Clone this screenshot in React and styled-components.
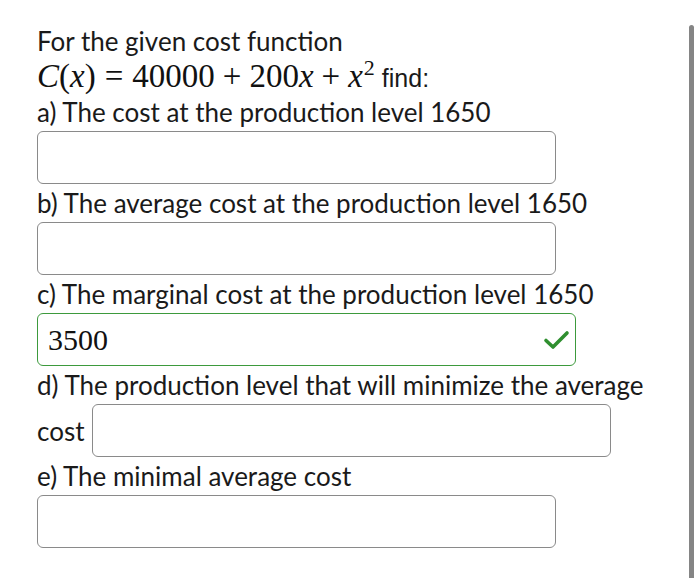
import React from "react";
import styled, { createGlobalStyle } from "styled-components";

const Global = createGlobalStyle`
  html, body { margin: 0; padding: 0; background: #fff; }
  body { width: 700px; height: 578px; overflow: hidden; }
`;

const Page = styled.div`
  position: relative;
  width: 700px;
  height: 578px;
  box-sizing: border-box;
  padding: 24px 0 0 37px;
  font-family: "Lato", "Open Sans", sans-serif;
  font-size: 26px;
  color: #1a1a1a;
`;

const Line = styled.div`
  height: ${(p) => p.$h || 38}px;
  line-height: ${(p) => p.$h || 38}px;
  white-space: nowrap;
`;

const MathLine = styled.div`
  height: 36px;
  line-height: 36px;
  white-space: nowrap;
  display: flex;
  align-items: baseline;
`;

const Formula = styled.span`
  font-family: "Liberation Serif", "DejaVu Serif", serif;
  font-size: 33px;
  color: #111;
`;

const V = styled.i`
  font-style: italic;
`;

const Op = styled.span`
  margin: 0 ${(p) => p.$s || 8}px;
`;

const Sup = styled.sup`
  font-size: 22px;
  line-height: 0;
  vertical-align: 12px;
  margin-left: 1px;
`;

const Find = styled.span`
  font-family: "Liberation Sans", Arial, sans-serif;
  font-size: 25px;
  margin-left: 7px;
`;

const Row = styled.div`
  display: flex;
  align-items: center;
  gap: 7px;
`;

const Box = styled.div`
  position: relative;
  box-sizing: border-box;
  width: ${(p) => p.$w}px;
  height: 53px;
  border: 1.5px solid ${(p) => (p.$ok ? "#3d9a3d" : "#8a8a8a")};
  border-radius: 6px;
  background: #fff;
  display: flex;
  align-items: center;
  padding-left: 10px;
`;

const Value = styled.span`
  font-family: "Liberation Serif", "DejaVu Serif", serif;
  font-size: 30px;
  color: #111;
`;

const Check = styled.svg`
  position: absolute;
  right: 3px;
  top: 50%;
  transform: translateY(-50%);
`;

const Scroll = styled.div`
  position: absolute;
  right: 6px;
  top: 25px;
  bottom: 0;
  width: 5px;
  border-radius: 3px 3px 0 0;
  background: #858585;
`;

export default function App() {
  return (
    <>
      <Global />
      <Page>
        <Line $h={34}>For the given cost function</Line>
        <MathLine>
          <Formula>
            <V>C</V>(<V>x</V>)<Op $s={9}>=</Op>40000<Op>+</Op>200<V>x</V>
            <Op>+</Op>
            <V>x</V>
            <Sup>2</Sup>
          </Formula>
          <Find>find:</Find>
        </MathLine>
        <Line $h={37}>a) The cost at the production level 1650</Line>
        <Row>
          <Box $w={519} />
        </Row>
        <Line>b) The average cost at the production level 1650</Line>
        <Row>
          <Box $w={519} />
        </Row>
        <Line>c) The marginal cost at the production level 1650</Line>
        <Row>
          <Box $w={539} $ok>
            <Value>3500</Value>
            <Check width="30" height="22" viewBox="0 0 30 22">
              <path
                d="M4 11.5 L11 18 L25 4"
                fill="none"
                stroke="#2f8f2f"
                strokeWidth="3.6"
                strokeLinecap="round"
                strokeLinejoin="round"
              />
            </Check>
          </Box>
        </Row>
        <Line>d) The production level that will minimize the average</Line>
        <Row>
          <span>cost</span>
          <Box $w={519} />
        </Row>
        <Line>e) The minimal average cost</Line>
        <Row>
          <Box $w={519} />
        </Row>
        <Scroll />
      </Page>
    </>
  );
}
